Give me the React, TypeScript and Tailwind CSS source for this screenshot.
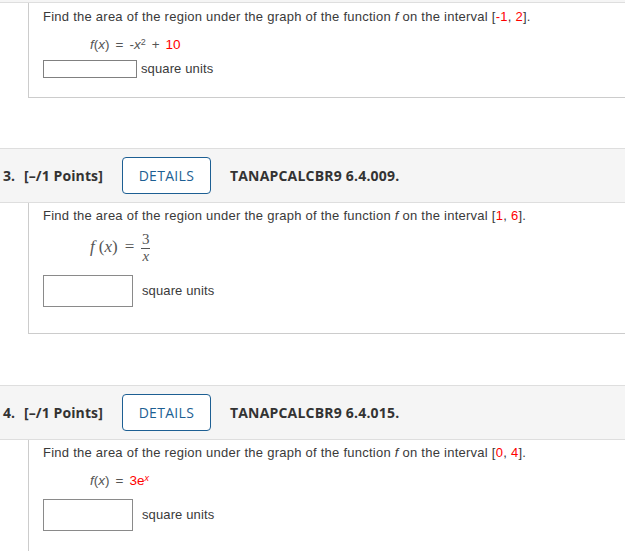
const body = { fontFamily: "'Liberation Sans', 'DejaVu Sans', sans-serif" };
const head = { fontFamily: "'Open Sans', 'Noto Sans', sans-serif" };
const math = { fontFamily: "'Liberation Serif', 'DejaVu Serif', serif" };

function Header({ num, code }: { num: number; code: string }) {
  return (
    <div
      className="flex h-[55px] items-center border-y border-[#dedede] bg-[#f5f5f5] text-[14px] text-[#333]"
      style={head}
    >
      <span className="ml-[3px] font-bold">{num}.</span>
      <span className="ml-[9px] font-bold tracking-[0.1px]">[–/1 Points]</span>
      <button className="ml-[19px] h-[37px] w-[89px] rounded-[4px] border border-[#1d5f93] bg-white text-[14px] font-medium tracking-[0.3px] text-[#1d5f93]">
        DETAILS
      </button>
      <span className="ml-[19px] font-bold tracking-[0.2px]">{code}</span>
    </div>
  );
}

function Prompt({ a, b }: { a: string; b: string }) {
  return (
    <p className="text-[13px] leading-[16px] tracking-[0.25px] text-[#3a3a3a]">
      Find the area of the region under the graph of the function <i>f</i> on the interval [
      <span className="text-[#ff0000]">{a}</span>, <span className="text-[#ff0000]">{b}</span>].
    </p>
  );
}

function Answer({ small }: { small?: boolean }) {
  return (
    <div className="flex items-center leading-[16px]">
      <div
        className={
          small
            ? "h-[18px] w-[94px] border border-[#808080] bg-white"
            : "h-[32px] w-[90px] border border-[#8a8a8a] bg-white"
        }
      />
      <span
        className={
          small
            ? "ml-[4px] text-[13px] tracking-[0.12px] text-[#3a3a3a]"
            : "ml-[9px] text-[13px] tracking-[0.12px] text-[#3a3a3a]"
        }
      >
        square units
      </span>
    </div>
  );
}

export default function App() {
  return (
    <div className="w-[625px] overflow-hidden bg-white" style={body}>
      <div className="h-[3px] border-b border-[#dedede] bg-[#f5f5f5]" />

      {/* question 2 body */}
      <div className="ml-[28px] border-b border-l border-[#cccccc] pb-[19px] pl-[14px] pt-[6px]">
        <Prompt a="-1" b="2" />
        <div className="ml-[47px] mt-[12px] text-[13.5px] leading-[16px] text-[#555]">
          <i>f</i>(<i>x</i>)<span className="mx-[6px]">=</span>-<i>x</i>
          <sup className="text-[9px]">2</sup>
          <span className="mx-[6px]">+</span>
          <span className="text-[#ff0000]">10</span>
        </div>
        <div className="mt-[7px]">
          <Answer small />
        </div>
      </div>

      <div className="mt-[50px]">
        <Header num={3} code="TANAPCALCBR9 6.4.009." />
      </div>
      <div className="ml-[28px] border-b border-l border-[#cccccc] pb-[26px] pl-[14px] pt-[5px]">
        <Prompt a="1" b="6" />
        <div className="ml-[47px] mt-[8px] flex h-[30px] items-center text-[17px] text-[#555]" style={math}>
          <i>f</i>
          <span className="ml-[4px]">(</span>
          <i>x</i>
          <span>)</span>
          <span className="mx-[7px]">=</span>
          <span className="flex flex-col items-center">
            <span className="text-[15px] leading-[14px]">3</span>
            <span className="mt-[2px] h-px w-[9px] bg-[#555]" />
            <span className="mt-[2px] text-[15px] italic leading-[11px]">x</span>
          </span>
        </div>
        <div className="mt-[13px]">
          <Answer />
        </div>
      </div>

      <div className="mt-[51px]">
        <Header num={4} code="TANAPCALCBR9 6.4.015." />
      </div>
      <div className="ml-[28px] h-[120px] border-l border-[#cccccc] pl-[14px] pt-[5px]">
        <Prompt a="0" b="4" />
        <div className="ml-[47px] mt-[12px] text-[13.5px] leading-[16px] text-[#555]">
          <i>f</i>(<i>x</i>)<span className="mx-[6px]">=</span>
          <span className="text-[#ff0000]">3e</span>
          <sup className="text-[9px] italic text-[#ff0000]">x</sup>
        </div>
        <div className="mt-[10px]">
          <Answer />
        </div>
      </div>
    </div>
  );
}
